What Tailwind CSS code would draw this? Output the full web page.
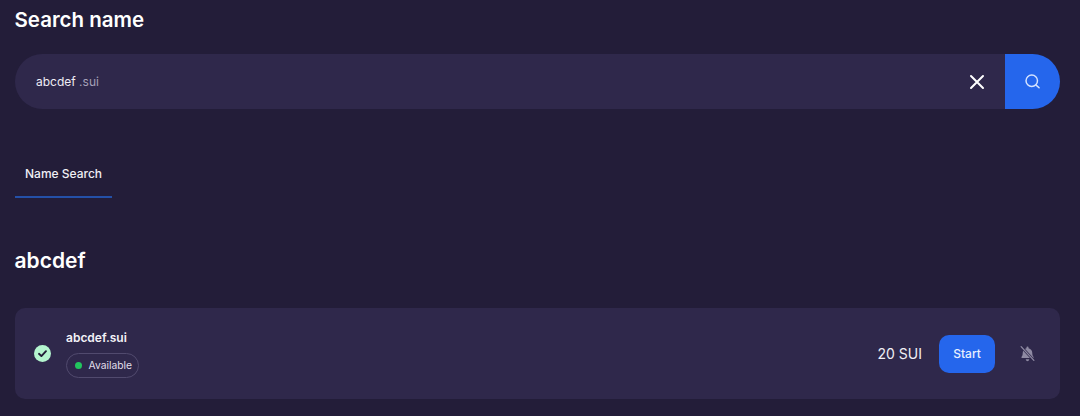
<!DOCTYPE html>
<html lang="en">
<head>
  <meta charset="UTF-8" />
  <title>Search name</title>
  <script src="https://cdn.jsdelivr.net/npm/@tailwindcss/browser@4"></script>
</head>
<body class="bg-[#231d39] h-[416px] w-[1080px] overflow-hidden font-[Inter,sans-serif] text-white">
  <div class="pl-[14.500px] pr-[20px] pt-[7px]">
    <h1 class="text-[20.500px] leading-[26px] font-semibold">Search name</h1>

    <!-- search bar -->
    <div class="flex h-[55px] mt-[21px]">
      <div class="flex-1 flex items-center bg-[#2f284b] rounded-l-[28px] pl-[21.500px] pr-[18px]">
        <span class="text-[12px] text-[#eeecf4]">abcdef <span class="text-[#a5a0b8]">.sui</span></span>
        <svg class="ml-auto" width="20" height="20" viewBox="0 0 20 20" fill="none" stroke="#fff" stroke-width="2" stroke-linecap="round"><path d="M4 4l12 12M16 4L4 16"/></svg>
      </div>
      <div class="w-[55px] flex items-center justify-center bg-[#2566ec] rounded-r-[28px]">
        <svg width="17" height="17" viewBox="0 0 16 16" fill="none" stroke="#d5e3ff" stroke-width="1.400" stroke-linecap="round"><circle cx="7.300" cy="7.300" r="5.400"/><path d="M11.400 11.400l2.800 2.500"/></svg>
      </div>
    </div>

    <!-- tabs -->
    <div class="mt-[46px] w-[97.500px] h-[43px] pt-[11px] border-b-2 border-[#2450a8]">
      <span class="block pl-[10.500px] text-[12px] leading-[16px] font-medium text-[#f0eff5]">Name Search</span>
    </div>

    <h2 class="mt-[50px] text-[21px] leading-[26px] font-semibold">abcdef</h2>

    <!-- result row -->
    <div class="mt-[34px] h-[91px] flex items-center bg-[#2f284b] rounded-[10px] pl-[19px] pr-[24px]">
      <svg width="17" height="17" viewBox="0 0 17 17"><circle cx="8.500" cy="8.500" r="8.500" fill="#b4f5cf"/><path d="M5 8.800l2.400 2.300L12 6.200" fill="none" stroke="#221d37" stroke-width="1.900" stroke-linecap="round" stroke-linejoin="round"/></svg>
      <div class="ml-[15.500px] pt-[1px]">
        <div class="text-[12px] leading-[16px] font-semibold text-[#f3f2f7]">abcdef.sui</div>
        <div class="mt-[7px] w-[73px] h-[25px] flex items-center rounded-full border border-[#514a6e] pl-[8px]">
          <span class="w-[7px] h-[7px] rounded-full bg-[#22c55e]"></span>
          <span class="ml-[6.500px] text-[10.300px] text-[#e0deea]">Available</span>
        </div>
      </div>
      <span class="ml-auto text-[14px] text-[#f0eff5]">20 SUI</span>
      <button class="ml-[17px] w-[56px] h-[38px] rounded-[10px] bg-[#2566ec] text-[12px] font-medium text-[#e8efff]">Start</button>
      <svg class="ml-[24px]" width="17" height="17" viewBox="0 0 16 16" fill="#8f8aa3"><path d="M8 1.500a1 1 0 0 1 1 1v.5c2.200.5 3.500 2.300 3.500 4.500 0 2 .5 3 1.200 3.800.3.400 0 .9-.5.9H2.800c-.5 0-.8-.5-.5-.9C3 10.500 3.500 9.500 3.500 7.500 3.500 5.300 4.800 3.500 7 3v-.5a1 1 0 0 1 1-1zM6.300 13.500h3.400a1.700 1.700 0 0 1-3.400 0z"/><path d="M2 1.500l12 13" stroke="#2f284b" stroke-width="2.400"/><path d="M2 1.500l12 13" stroke="#8f8aa3" stroke-width="1.200" stroke-linecap="round"/></svg>
    </div>
  </div>
</body>
</html>
